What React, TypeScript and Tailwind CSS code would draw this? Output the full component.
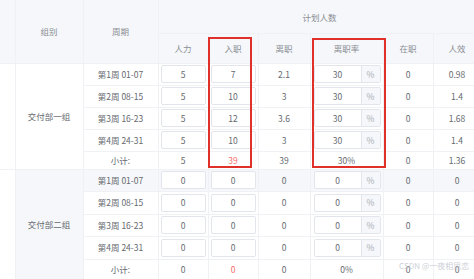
import React from "react";

interface IRow {
    week: string;
    staff: string;
    hired: string;
    left: string;
    rate: string;
    onJob: string;
    eff: string;
}

interface IGroup {
    name: string;
    rows: IRow[];
    total: IRow;
    hover?: boolean;
}

const groups: IGroup[] = [
    {
        name: '交付部一组',
        rows: [
            { week: '第1周 01-07', staff: '5', hired: '7', left: '2.1', rate: '30', onJob: '0', eff: '0.98' },
            { week: '第2周 08-15', staff: '5', hired: '10', left: '3', rate: '30', onJob: '0', eff: '1.4' },
            { week: '第3周 16-23', staff: '5', hired: '12', left: '3.6', rate: '30', onJob: '0', eff: '1.68' },
            { week: '第4周 24-31', staff: '5', hired: '10', left: '3', rate: '30', onJob: '0', eff: '1.4' },
        ],
        total: { week: '小计:', staff: '5', hired: '39', left: '39', rate: '30%', onJob: '0', eff: '1.36' },
    },
    {
        name: '交付部二组',
        hover: true,
        rows: [
            { week: '第1周 01-07', staff: '0', hired: '0', left: '0', rate: '0', onJob: '0', eff: '0' },
            { week: '第2周 08-15', staff: '0', hired: '0', left: '0', rate: '0', onJob: '0', eff: '0' },
            { week: '第3周 16-23', staff: '0', hired: '0', left: '0', rate: '0', onJob: '0', eff: '0' },
            { week: '第4周 24-31', staff: '0', hired: '0', left: '0', rate: '0', onJob: '0', eff: '0' },
        ],
        total: { week: '小计:', staff: '0', hired: '0', left: '0', rate: '0%', onJob: '0', eff: '0' },
    },
];

const cell = 'border-r border-b border-[#eff1f5] text-center p-0';

const NumInput: React.FC<{ value: string }> = ({ value }) => (
    <div className="mx-auto flex h-[18px] w-[45px] items-center justify-center rounded-[2px] border border-[#e2e5eb] bg-white">
        {value}
    </div>
)

const RateInput: React.FC<{ value: string }> = ({ value }) => (
    <div className="ml-[3px] flex h-[18px] w-[67px] overflow-hidden rounded-[2px] border border-[#e2e5eb] bg-white">
        <div className="flex flex-1 items-center justify-center">{value}</div>
        <div className="flex w-[19px] items-center justify-center border-l border-[#e2e5eb] bg-[#f5f7fa] text-[#a8abb2]">%</div>
    </div>
)

export default function App() {
    return (
        <div className="relative h-[279px] w-[474px] overflow-hidden bg-white font-['Noto_Sans_CJK_SC',sans-serif] text-[8.5px] text-[#66696f]">
            <table className="w-[481px] table-fixed border-collapse">
                <colgroup>
                    <col className="w-[15px]"/>
                    <col className="w-[68px]"/>
                    <col className="w-[75px]"/>
                    <col className="w-[50px]"/>
                    <col className="w-[50px]"/>
                    <col className="w-[52px]"/>
                    <col className="w-[73px]"/>
                    <col className="w-[50px]"/>
                    <col className="w-[48px]"/>
                </colgroup>
                <thead className="bg-[#f5f7fa] text-[#8a8d93]">
                    <tr className="h-[33px]">
                        <th rowSpan={2} className={cell + ' font-normal'}></th>
                        <th rowSpan={2} className={cell + ' font-normal'}>组别</th>
                        <th rowSpan={2} className={cell + ' font-normal'}>周期</th>
                        <th colSpan={6} className={cell + ' pt-[3px] font-normal'}>计划人数</th>
                    </tr>
                    <tr className="h-[30px]">
                        <th className={cell + ' font-normal'}>人力</th>
                        <th className={cell + ' font-normal'}>入职</th>
                        <th className={cell + ' font-normal'}>离职</th>
                        <th className={cell + ' font-normal'}>离职率</th>
                        <th className={cell + ' font-normal'}>在职</th>
                        <th className={cell + ' font-normal'}>人效</th>
                    </tr>
                </thead>
                <tbody>
                    {groups.map((g, gi) => (
                        <React.Fragment key={g.name}>
                            {g.rows.map((r, i) => (
                                <tr key={r.week} className={(gi === 0 ? 'h-[22px]' : 'h-[22.5px]') + (g.hover && i === 0 ? ' bg-[#f5f7fa]' : '')}>
                                    {i === 0 && <td rowSpan={5} className={cell + ' bg-white'}></td>}
                                    {i === 0 && (
                                        <td rowSpan={5} className={cell + (g.hover ? ' bg-[#f5f7fa]' : ' bg-white')}>{g.name}</td>
                                    )}
                                    <td className={cell}>{r.week}</td>
                                    <td className={cell}><NumInput value={r.staff}/></td>
                                    <td className={cell}><NumInput value={r.hired}/></td>
                                    <td className={cell}>{r.left}</td>
                                    <td className={cell}><RateInput value={r.rate}/></td>
                                    <td className={cell}>{r.onJob}</td>
                                    <td className={cell}>{r.eff}</td>
                                </tr>
                            ))}
                            <tr className={gi === 0 ? 'h-[18px]' : 'h-[20px]'}>
                                <td className={cell}>{g.total.week}</td>
                                <td className={cell}>{g.total.staff}</td>
                                <td className={cell + ' text-[#f56c6c]'}>{g.total.hired}</td>
                                <td className={cell}>{g.total.left}</td>
                                <td className={cell}>{g.total.rate}</td>
                                <td className={cell}>{g.total.onJob}</td>
                                <td className={cell}>{g.total.eff}</td>
                            </tr>
                        </React.Fragment>
                    ))}
                </tbody>
            </table>

            {/* annotation boxes */}
            <div className="absolute left-[208px] top-[37px] h-[131px] w-[44px] border-2 border-[#e0302a]"/>
            <div className="absolute left-[312px] top-[38px] h-[130px] w-[74px] border-2 border-[#e0302a]"/>

            <div className="absolute left-[399px] top-[260px] text-[8px] text-[#c0c4cc]/80">CSDN @一夜相思恋</div>
        </div>
    )
}
